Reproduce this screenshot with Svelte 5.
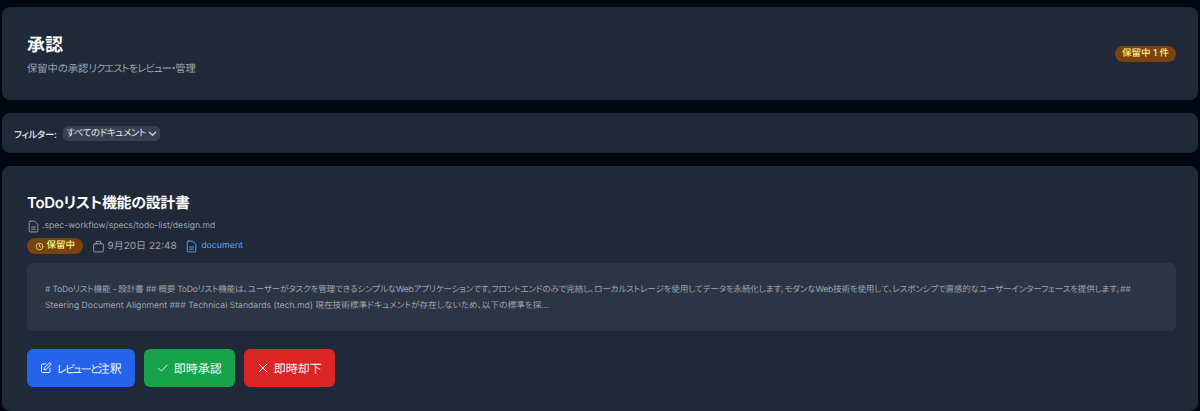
<script>
  let filter = $state('all');
  const previewHead = '# ToDoリスト機能 - 設計書 ## 概要 ToDoリスト機能は、ユーザーがタスクを管理できるシンプルなWebアプリケーションです。フロントエンドのみで完結し、ローカルストレージを使用してデータを永続化します。モダンなWeb技術を使用して、レスポンシブで直感的なユーザーインターフェースを提供します。##';
  const previewRest = 'Steering Document Alignment ### Technical Standards (tech.md) 現在技術標準ドキュメントが存在しないため、以下の標準を採...';
</script>

<div class="page">
  <header class="card head">
    <div>
      <h1>承認</h1>
      <p class="sub">保留中の承認<span class="kana">リクエストをレビュー・</span>管理</p>
    </div>
    <span class="pill count">保留中 1 件</span>
  </header>

  <div class="card filters">
    <span class="filter-label">フィルター:</span>
    <div class="select-wrap">
      <select bind:value={filter}>
        <option value="all">すべてのドキュメント</option>
      </select>
      <svg class="chev" viewBox="0 0 12 12" fill="none" stroke="currentColor" stroke-width="1.3" stroke-linecap="round" stroke-linejoin="round"><path d="M2.5 4.5 6 8l3.5-3.5" /></svg>
    </div>
  </div>

  <section class="card item">
    <h2>ToDoリスト機能の設計書</h2>
    <div class="path">
      <svg class="ic" viewBox="0 0 24 24" fill="none" stroke="currentColor" stroke-width="1.7" stroke-linecap="round" stroke-linejoin="round"><path d="M6 2h8l6 6v12a2 2 0 0 1-2 2H6a2 2 0 0 1-2-2V4a2 2 0 0 1 2-2z" /><path d="M8.5 13h7M8.5 17h7" /></svg>
      <span>.spec-workflow/specs/todo-list/design.md</span>
    </div>
    <div class="meta">
      <span class="pill status">
        <svg class="ic-s" viewBox="0 0 24 24" fill="none" stroke="currentColor" stroke-width="2" stroke-linecap="round" stroke-linejoin="round"><circle cx="12" cy="12" r="9" /><path d="M12 7v5l3 2" /></svg>
        保留中
      </span>
      <span class="date">
        <svg class="ic" viewBox="0 0 24 24" fill="none" stroke="currentColor" stroke-width="1.7" stroke-linecap="round" stroke-linejoin="round"><rect x="3" y="7" width="18" height="15" rx="2" /><path d="M8 7V2.5h8V7" /></svg>
        9月20日 22:48
      </span>
      <span class="type">
        <svg class="ic" viewBox="0 0 24 24" fill="none" stroke="currentColor" stroke-width="1.7" stroke-linecap="round" stroke-linejoin="round"><path d="M6 2h8l6 6v12a2 2 0 0 1-2 2H6a2 2 0 0 1-2-2V4a2 2 0 0 1 2-2z" /><path d="M8.5 13h7M8.5 17h7" /></svg>
        document
      </span>
    </div>
    <div class="preview">
      <div class="line-tight">{previewHead}</div>
      <div>{previewRest}</div>
    </div>
    <div class="actions">
      <button class="btn blue">
        <svg class="ic-b" viewBox="0 0 24 24" fill="none" stroke="currentColor" stroke-width="2" stroke-linecap="round" stroke-linejoin="round"><path d="M11 4H5a2 2 0 0 0-2 2v13a2 2 0 0 0 2 2h13a2 2 0 0 0 2-2v-6" /><path d="M18 2.5a2.1 2.1 0 0 1 3.2 3.2L12 15l-4 1 1-4z" /></svg>
        <span><span class="tight">レビューと</span>注釈</span>
      </button>
      <button class="btn green">
        <svg class="ic-b" viewBox="0 0 24 24" fill="none" stroke="currentColor" stroke-width="2" stroke-linecap="round" stroke-linejoin="round"><path d="M3.5 13l5 5L20.5 6" /></svg>
        即時承認
      </button>
      <button class="btn red">
        <svg class="ic-b" viewBox="0 0 24 24" fill="none" stroke="currentColor" stroke-width="2" stroke-linecap="round" stroke-linejoin="round"><path d="M4.5 4.5l15 15M19.5 4.5l-15 15" /></svg>
        即時却下
      </button>
    </div>
  </section>
</div>

<style>
  :global(body) {
    margin: 0;
    background: #030712;
    font-family: Inter, "Noto Sans CJK JP", sans-serif;
    font-feature-settings: "palt";
    text-rendering: geometricPrecision;
  }

  .page {
    display: flex;
    flex-direction: column;
    gap: 13px;
    padding: 7px 2px 0;
    height: 404px;
    overflow: hidden;
  }

  .card {
    background: #1f2937;
    border-radius: 8px;
    box-shadow: 0 1px 2px rgba(0, 0, 0, 0.2);
  }

  .head {
    display: flex;
    justify-content: space-between;
    align-items: center;
    height: 93px;
    padding: 0 22px 0 25px;
    box-sizing: border-box;
  }

  h1 {
    margin: 4px 0 0;
    font-size: 18px;
    line-height: 24px;
    font-weight: 700;
    color: #f9fafb;
  }

  .sub {
    margin: 3px 0 0;
    font-size: 10.3px;
    line-height: 16px;
    color: #9ca3af;
  }

  .kana {
    letter-spacing: -0.9px;
  }

  .pill {
    display: inline-flex;
    align-items: center;
    border-radius: 999px;
    background: #78430f;
    color: #fef08a;
    font-size: 9.5px;
    font-weight: 500;
    line-height: 16px;
  }

  .count {
    margin-top: 1px;
    padding: 0 7px;
  }

  .filters {
    display: flex;
    align-items: center;
    gap: 6px;
    height: 40px;
    padding: 1px 12px 0;
    box-sizing: border-box;
  }

  .filter-label {
    font-size: 9.5px;
    font-weight: 500;
    letter-spacing: -0.3px;
    color: #e5e7eb;
  }

  .select-wrap {
    position: relative;
    display: flex;
    color: #e5e7eb;
  }

  select {
    appearance: none;
    border: none;
    border-radius: 5px;
    background: #374151;
    color: #e5e7eb;
    font: inherit;
    font-feature-settings: "palt";
    text-rendering: geometricPrecision;
    font-size: 9.5px;
    letter-spacing: -0.4px;
    line-height: 15px;
    height: 15px;
    padding: 0 13px 0 3.5px;
    width: 97px;
    box-sizing: border-box;
  }

  .chev {
    position: absolute;
    right: 2px;
    top: 2px;
    width: 11px;
    height: 11px;
    pointer-events: none;
  }

  .item {
    flex: 1;
    padding: 26px 22px 0 25px;
  }

  h2 {
    margin: 0;
    font-size: 15px;
    line-height: 22px;
    font-weight: 600;
    letter-spacing: -0.35px;
    color: #f9fafb;
  }

  .path {
    display: flex;
    align-items: center;
    gap: 2px;
    margin-top: 5px;
    font-size: 8.6px;
    line-height: 14px;
    color: #9ca3af;
  }

  .ic {
    width: 13px;
    height: 13px;
    flex: none;
  }

  .ic-s {
    width: 9px;
    height: 9px;
    flex: none;
  }

  .meta {
    display: flex;
    align-items: center;
    gap: 10px;
    margin-top: 5px;
    font-size: 10px;
    line-height: 14px;
  }

  .status {
    gap: 3px;
    padding: 0 7.5px;
  }

  .date,
  .type {
    display: inline-flex;
    align-items: center;
    gap: 3px;
    color: #9ca3af;
  }

  .date {
    margin-left: -1px;
  }

  .type {
    margin-left: -1.5px;
    color: #60a5fa;
    font-size: 8.8px;
  }

  .preview {
    margin-top: 9px;
    height: 68px;
    box-sizing: border-box;
    padding: 18.5px 18px 0;
    border-radius: 6px;
    background: #2b3544;
    color: #9ca3af;
    font-size: 8.65px;
    line-height: 16.5px;
  }

  .line-tight {
    letter-spacing: -0.25px;
    white-space: nowrap;
  }

  .actions {
    display: flex;
    gap: 9px;
    margin-top: 18px;
  }

  .btn {
    display: inline-flex;
    align-items: center;
    justify-content: center;
    gap: 5px;
    height: 38px;
    padding: 0 13px;
    border: none;
    border-radius: 6px;
    color: #f3f4f6;
    font: inherit;
    font-feature-settings: "palt";
    text-rendering: geometricPrecision;
    font-size: 12px;
    font-weight: 400;
  }

  .tight {
    font-size: 10.8px;
    letter-spacing: -1.6px;
  }

  .ic-b {
    width: 12px;
    height: 12px;
    flex: none;
  }

  .blue {
    background: #2563eb;
  }

  .green {
    background: #16a34a;
  }

  .red {
    background: #dc2626;
  }
</style>
